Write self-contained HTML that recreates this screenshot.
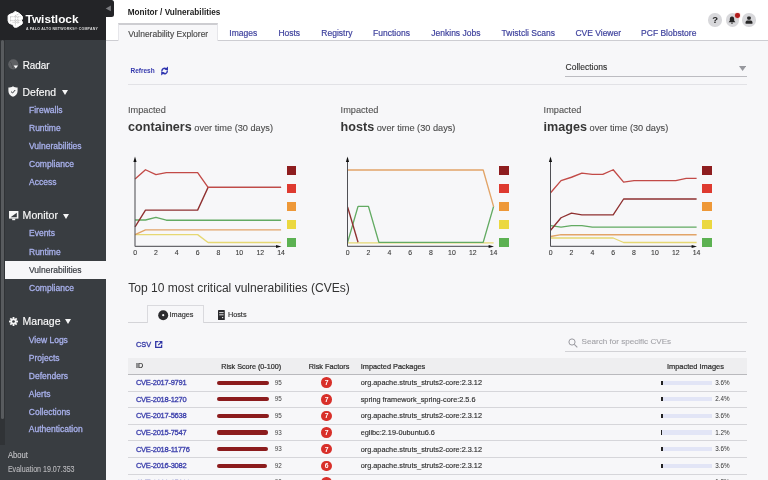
<!DOCTYPE html>
<html><head><meta charset="utf-8"><style>
html,body{margin:0;padding:0;}
body{width:768px;height:480px;overflow:hidden;position:relative;background:#f7f7f9;font-family:"Liberation Sans", sans-serif;}
#root{position:absolute;left:0;top:0;width:768px;height:480px;will-change:transform;}
</style></head><body>
<div id="root"><div style="position:absolute;left:106px;top:0px;width:662px;height:40px;background:#ffffff;"></div><div style="position:absolute;left:106px;top:39.8px;width:662px;height:1.3px;background:#cdcdd2;"></div><div style="position:absolute;left:127.8px;top:9.16px;font-size:8.2px;line-height:8.2px;color:#222;font-weight:700;white-space:nowrap;">Monitor / Vulnerabilities</div><div style="position:absolute;left:118.2px;top:23.1px;width:99.8px;height:18px;background:#f7f7f9;border-top:2px solid #cdcdd1;border-left:1px solid #e6e6ea;border-right:1px solid #e6e6ea;box-sizing:border-box;"></div><div style="position:absolute;left:128.2px;top:29.60px;font-size:8.5px;line-height:8.5px;color:#4a4a4a;font-weight:400;white-space:nowrap;-webkit-text-stroke:0.15px #4a4a4a;">Vulnerability Explorer</div><div style="position:absolute;left:229.3px;top:29.00px;font-size:8.5px;line-height:8.5px;color:#3c3f9c;font-weight:400;white-space:nowrap;-webkit-text-stroke:0.18px #3c3f9c;">Images</div><div style="position:absolute;left:278.4px;top:29.00px;font-size:8.5px;line-height:8.5px;color:#3c3f9c;font-weight:400;white-space:nowrap;-webkit-text-stroke:0.18px #3c3f9c;">Hosts</div><div style="position:absolute;left:321.3px;top:29.00px;font-size:8.5px;line-height:8.5px;color:#3c3f9c;font-weight:400;white-space:nowrap;-webkit-text-stroke:0.18px #3c3f9c;">Registry</div><div style="position:absolute;left:373.1px;top:29.00px;font-size:8.5px;line-height:8.5px;color:#3c3f9c;font-weight:400;white-space:nowrap;-webkit-text-stroke:0.18px #3c3f9c;">Functions</div><div style="position:absolute;left:431.3px;top:29.00px;font-size:8.5px;line-height:8.5px;color:#3c3f9c;font-weight:400;white-space:nowrap;-webkit-text-stroke:0.18px #3c3f9c;">Jenkins Jobs</div><div style="position:absolute;left:501.6px;top:29.00px;font-size:8.5px;line-height:8.5px;color:#3c3f9c;font-weight:400;white-space:nowrap;-webkit-text-stroke:0.18px #3c3f9c;">Twistcli Scans</div><div style="position:absolute;left:575.4px;top:29.00px;font-size:8.5px;line-height:8.5px;color:#3c3f9c;font-weight:400;white-space:nowrap;-webkit-text-stroke:0.18px #3c3f9c;">CVE Viewer</div><div style="position:absolute;left:641.1px;top:29.00px;font-size:8.5px;line-height:8.5px;color:#3c3f9c;font-weight:400;white-space:nowrap;-webkit-text-stroke:0.18px #3c3f9c;">PCF Blobstore</div><div style="position:absolute;left:708.4px;top:13.3px;width:13.4px;height:13.4px;background:#d8d8db;border-radius:50%;"></div><div style="position:absolute;left:725.5999999999999px;top:13.3px;width:13.4px;height:13.4px;background:#d8d8db;border-radius:50%;"></div><div style="position:absolute;left:742.4px;top:13.3px;width:13.4px;height:13.4px;background:#d8d8db;border-radius:50%;"></div><div style="position:absolute;left:712.3px;top:15.36px;font-size:9.5px;line-height:9.5px;color:#222;font-weight:700;white-space:nowrap;">?</div><svg style="position:absolute;left:728.2px;top:16.2px" width="8" height="8" viewBox="0 0 8 8"><path d="M4 0.4 C2.4 0.4 1.8 1.8 1.8 3.2 L1.8 4.8 L0.6 6.3 L7.4 6.3 L6.2 4.8 L6.2 3.2 C6.2 1.8 5.6 0.4 4 0.4Z M3.1 6.8 L4.9 6.8 C4.9 7.5 4.5 7.8 4 7.8 C3.5 7.8 3.1 7.5 3.1 6.8Z" fill="#262626"/></svg><div style="position:absolute;left:735.2px;top:12.8px;width:4.9px;height:4.9px;background:#b01c1c;border-radius:50%;box-shadow:0 0 1.2px #e0403a;"></div><svg style="position:absolute;left:745.4px;top:16.3px" width="8" height="8" viewBox="0 0 8 8"><rect x="2.2" y="0.4" width="3.6" height="3.4" rx="1.2" fill="#262626"/><path d="M0.6 7.8 L0.6 6.2 C0.6 5 1.6 4.4 2.6 4.4 L5.4 4.4 C6.4 4.4 7.4 5 7.4 6.2 L7.4 7.8Z" fill="#262626"/></svg><div style="position:absolute;left:0px;top:0px;width:106.1px;height:480px;background:#393d41;"></div><div style="position:absolute;left:0px;top:0px;width:106.1px;height:40px;background:#232427;"></div><div style="position:absolute;left:105px;top:0px;width:8.8px;height:17.1px;background:#232427;border-radius:0 2.5px 2.5px 0;"></div><svg style="position:absolute;left:105px;top:5px" width="7" height="8" viewBox="0 0 7 8"><path d="M5.9 0.5 L5.9 6.3 L0.7 3.4Z" fill="#7a7b7f"/></svg><div style="position:absolute;left:0px;top:40px;width:4.6px;height:404.5px;background:#303336;"></div><div style="position:absolute;left:0.9px;top:40.2px;width:3.2px;height:378.4px;background:#585b5e;border-radius:1.6px;"></div><svg style="position:absolute;left:0px;top:0px" width="30" height="32" viewBox="0 0 30 32"><path d="M13 13.2 L15.2 11.4 L19.6 13.5 L22.4 16.4 L22.4 19.3 L21.2 20 L22.4 22.1 L22.1 24 L16.9 27.2 L14.3 27.2 L12.7 24.6 L9.2 23.3 L8.1 20.8 L8.1 15.6 L9.9 14.3Z" fill="#fff" stroke="#fff" stroke-width="1" stroke-linejoin="round"/><path d="M10.5 16.6 L10.5 21.5 M15.4 15.5 L15.4 25.5 M17.8 17 L17.8 23.5 M10.5 16.7 L20.5 16.7 M10.5 20.4 L20.5 20.4 M12.5 22.3 L20 22.3 M15.4 15.5 L19.5 13.8" fill="none" stroke="#9c9c9c" stroke-width="0.55" stroke-dasharray="1.2 0.6"/></svg><div style="position:absolute;left:25.6px;top:14.31px;font-size:11.8px;line-height:11.8px;color:#fff;font-weight:700;white-space:nowrap;">Twistlock</div><div style="position:absolute;left:26.2px;top:27.4px;font-size:7px;line-height:7px;font-weight:700;color:#ddd;white-space:nowrap;letter-spacing:0.45px;transform:scale(0.5);transform-origin:0 0;">A PALO ALTO NETWORKS® COMPANY</div><svg style="position:absolute;left:8px;top:59px" width="11" height="11" viewBox="0 0 11 11"><circle cx="5.3" cy="5.3" r="5.1" fill="#5f6164"/><path d="M2 3 Q4 4 3.5 6 Q5 7 4.5 9" fill="none" stroke="#4c4e51" stroke-width="0.9"/><path d="M5.6 6.4 L10 6.4 L7.8 9.6Z" fill="#fff"/></svg><div style="position:absolute;left:22.7px;top:61.02px;font-size:9.9px;line-height:9.9px;color:#fafafa;font-weight:400;white-space:nowrap;-webkit-text-stroke:0.15px #fafafa;transform:scaleY(1.1);transform-origin:0 8.38035px;">Radar</div><svg style="position:absolute;left:8.3px;top:86px" width="10" height="11" viewBox="0 0 10 11"><path d="M5 0.3 C6.5 1.3 8 1.6 9.6 1.6 L9.6 5 C9.6 8 7.5 9.8 5 10.8 C2.5 9.8 0.4 8 0.4 5 L0.4 1.6 C2 1.6 3.5 1.3 5 0.3Z" fill="#f6f6f6"/><path d="M3 5.6 L4.6 7 L7.2 4" fill="none" stroke="#393d41" stroke-width="1"/></svg><div style="position:absolute;left:22.6px;top:87.50px;font-size:10.4px;line-height:10.4px;color:#fafafa;font-weight:400;white-space:nowrap;-webkit-text-stroke:0.15px #fafafa;transform:scaleY(1.1);transform-origin:0 8.803600000000001px;">Defend</div><svg style="position:absolute;left:61.5px;top:90.39999999999999px" width="6" height="5" viewBox="0 0 6 5"><path d="M0 0 L6 0 L3 5Z" fill="#f6f6f6"/></svg><div style="position:absolute;left:29.0px;top:105.80px;font-size:8.5px;line-height:8.5px;color:#a9b1ec;font-weight:400;white-space:nowrap;-webkit-text-stroke:0.3px #a7afea;">Firewalls</div><div style="position:absolute;left:29.0px;top:123.92px;font-size:8.5px;line-height:8.5px;color:#a9b1ec;font-weight:400;white-space:nowrap;-webkit-text-stroke:0.3px #a7afea;">Runtime</div><div style="position:absolute;left:29.0px;top:142.04px;font-size:8.5px;line-height:8.5px;color:#a9b1ec;font-weight:400;white-space:nowrap;-webkit-text-stroke:0.3px #a7afea;">Vulnerabilities</div><div style="position:absolute;left:29.0px;top:160.16px;font-size:8.5px;line-height:8.5px;color:#a9b1ec;font-weight:400;white-space:nowrap;-webkit-text-stroke:0.3px #a7afea;">Compliance</div><div style="position:absolute;left:29.0px;top:178.28px;font-size:8.5px;line-height:8.5px;color:#a9b1ec;font-weight:400;white-space:nowrap;-webkit-text-stroke:0.3px #a7afea;">Access</div><svg style="position:absolute;left:9px;top:211px" width="10" height="10" viewBox="0 0 10 10"><rect x="0" y="0" width="9.4" height="7.6" fill="#f6f6f6"/><path d="M1.6 6.2 L7.8 1.8 L7.8 6.2Z" fill="#393d41"/><rect x="3.2" y="7.6" width="3" height="1.6" fill="#f6f6f6"/></svg><div style="position:absolute;left:22.6px;top:210.43px;font-size:10.6px;line-height:10.6px;color:#fafafa;font-weight:400;white-space:nowrap;-webkit-text-stroke:0.15px #fafafa;transform:scaleY(1.1);transform-origin:0 8.9729px;">Monitor</div><svg style="position:absolute;left:63.3px;top:213.5px" width="6" height="5" viewBox="0 0 6 5"><path d="M0 0 L6 0 L3 5Z" fill="#f6f6f6"/></svg><div style="position:absolute;left:5px;top:261px;width:101.5px;height:18px;background:#f7f7f9;"></div><div style="position:absolute;left:29.0px;top:229.40px;font-size:8.5px;line-height:8.5px;color:#a9b1ec;font-weight:400;white-space:nowrap;-webkit-text-stroke:0.3px #a7afea;">Events</div><div style="position:absolute;left:29.0px;top:247.50px;font-size:8.5px;line-height:8.5px;color:#a9b1ec;font-weight:400;white-space:nowrap;-webkit-text-stroke:0.3px #a7afea;">Runtime</div><div style="position:absolute;left:29.0px;top:265.60px;font-size:8.5px;line-height:8.5px;color:#3a3e44;font-weight:400;white-space:nowrap;-webkit-text-stroke:0.2px #3a3e44;">Vulnerabilities</div><div style="position:absolute;left:29.0px;top:283.70px;font-size:8.5px;line-height:8.5px;color:#a9b1ec;font-weight:400;white-space:nowrap;-webkit-text-stroke:0.3px #a7afea;">Compliance</div><svg style="position:absolute;left:8.6px;top:317px" width="9" height="9" viewBox="0 0 10 10"><g fill="#f6f6f6"><circle cx="5" cy="5" r="3.4"/><rect x="4" y="0" width="2" height="10"/><rect x="0" y="4" width="10" height="2"/><rect x="4" y="0" width="2" height="10" transform="rotate(45 5 5)"/><rect x="4" y="0" width="2" height="10" transform="rotate(-45 5 5)"/></g><circle cx="5" cy="5" r="1.5" fill="#393d41"/></svg><div style="position:absolute;left:22.6px;top:315.81px;font-size:10.5px;line-height:10.5px;color:#fafafa;font-weight:400;white-space:nowrap;-webkit-text-stroke:0.15px #fafafa;transform:scaleY(1.1);transform-origin:0 8.888250000000001px;">Manage</div><svg style="position:absolute;left:65.3px;top:318.8px" width="6" height="5" viewBox="0 0 6 5"><path d="M0 0 L6 0 L3 5Z" fill="#f6f6f6"/></svg><div style="position:absolute;left:28.8px;top:335.80px;font-size:8.5px;line-height:8.5px;color:#a9b1ec;font-weight:400;white-space:nowrap;-webkit-text-stroke:0.3px #a7afea;">View Logs</div><div style="position:absolute;left:28.8px;top:353.73px;font-size:8.5px;line-height:8.5px;color:#a9b1ec;font-weight:400;white-space:nowrap;-webkit-text-stroke:0.3px #a7afea;">Projects</div><div style="position:absolute;left:28.8px;top:371.66px;font-size:8.5px;line-height:8.5px;color:#a9b1ec;font-weight:400;white-space:nowrap;-webkit-text-stroke:0.3px #a7afea;">Defenders</div><div style="position:absolute;left:28.8px;top:389.59px;font-size:8.5px;line-height:8.5px;color:#a9b1ec;font-weight:400;white-space:nowrap;-webkit-text-stroke:0.3px #a7afea;">Alerts</div><div style="position:absolute;left:28.8px;top:407.52px;font-size:8.5px;line-height:8.5px;color:#a9b1ec;font-weight:400;white-space:nowrap;-webkit-text-stroke:0.3px #a7afea;">Collections</div><div style="position:absolute;left:28.8px;top:425.45px;font-size:8.5px;line-height:8.5px;color:#a9b1ec;font-weight:400;white-space:nowrap;-webkit-text-stroke:0.3px #a7afea;">Authentication</div><div style="position:absolute;left:7.9px;top:451.77px;font-size:7.6px;line-height:7.6px;color:#c4c4c7;font-weight:400;white-space:nowrap;-webkit-text-stroke:0.1px #c4c4c7;transform:scaleY(1.1);transform-origin:0 6.4px;">About</div><div style="position:absolute;left:7.9px;top:466.79px;font-size:7.1px;line-height:7.1px;color:#b9b9bc;font-weight:400;white-space:nowrap;-webkit-text-stroke:0.1px #b9b9bc;transform:scaleY(1.15);transform-origin:0 6px;">Evaluation 19.07.353</div><div style="position:absolute;left:130.5px;top:67.50px;font-size:6.5px;line-height:6.5px;color:#3539ad;font-weight:700;white-space:nowrap;">Refresh</div><svg style="position:absolute;left:160.5px;top:66px" width="7.2" height="10" viewBox="0 0 7.2 10"><path d="M1 5.4 A2.6 2.6 0 0 1 5.2 2.9" fill="none" stroke="#3036b0" stroke-width="1.4"/><path d="M7 0.4 L7 4.4 L3.4 3.6Z" fill="#3036b0"/><path d="M6.2 4.6 A2.6 2.6 0 0 1 2 7.1" fill="none" stroke="#3036b0" stroke-width="1.4"/><path d="M0.2 9.6 L0.2 5.6 L3.8 6.4Z" fill="#3036b0"/></svg><div style="position:absolute;left:128px;top:83.5px;width:619px;height:1px;background:#e2e2e6;"></div><div style="position:absolute;left:565.6px;top:62.80px;font-size:8.5px;line-height:8.5px;color:#2e2e2e;font-weight:400;white-space:nowrap;-webkit-text-stroke:0.12px #2e2e2e;">Collections</div><div style="position:absolute;left:565px;top:75.9px;width:182px;height:1px;background:#bcbcc1;"></div><svg style="position:absolute;left:738.8px;top:65.6px" width="7.2" height="5" viewBox="0 0 7.2 5"><path d="M0 0 L7.2 0 L3.6 5Z" fill="#97989e"/></svg><div style="position:absolute;left:128.06px;top:105.91px;font-size:9.2px;line-height:9.2px;color:#505050;font-weight:400;white-space:nowrap;-webkit-text-stroke:0.1px #505050;">Impacted</div><div style="position:absolute;left:128.06px;top:120.03px;line-height:12.6px;white-space:nowrap;"><span style="font-size:12.6px;font-weight:700;color:#363636">containers</span><span style="font-size:9.2px;color:#4d4d4d;-webkit-text-stroke:0.12px #4d4d4d"> over time (30 days)</span></div><svg style="position:absolute;left:0px;top:0px" width="768" height="480" viewBox="0 0 768 480"><polyline points="135.06,234.60 145.49,234.60 155.92,234.60 166.35,234.60 176.78,234.60 187.21,234.60 197.64,234.60 208.07,242.50 218.50,242.50 228.93,242.50 239.36,242.50 249.79,242.50 260.22,242.50 270.65,242.50 281.08,242.50" fill="none" stroke="#e6d873" stroke-width="1.35" stroke-linejoin="round"/><polyline points="135.06,234.60 145.49,229.90 155.92,229.90 166.35,229.90 176.78,229.90 187.21,229.90 197.64,229.90 208.07,229.90 218.50,229.90 228.93,229.90 239.36,229.90 249.79,229.90 260.22,229.90 270.65,229.90 281.08,229.90" fill="none" stroke="#e2a468" stroke-width="1.35" stroke-linejoin="round"/><polyline points="135.06,220.00 145.49,220.00 155.92,217.40 166.35,220.20 176.78,220.20 187.21,220.20 197.64,220.20 208.07,220.20 218.50,220.20 228.93,220.20 239.36,220.20 249.79,220.20 260.22,220.20 270.65,220.20 281.08,220.20" fill="none" stroke="#62aa62" stroke-width="1.35" stroke-linejoin="round"/><polyline points="135.06,226.90 145.49,210.10 155.92,210.10 166.35,210.10 176.78,210.10 187.21,210.10 197.64,210.10 208.07,187.40 218.50,187.40 228.93,187.40 239.36,187.40 249.79,187.40 260.22,187.40 270.65,187.40 281.08,187.40" fill="none" stroke="#8f3030" stroke-width="1.35" stroke-linejoin="round"/><polyline points="135.06,179.10 145.49,169.75 155.92,174.60 166.35,172.60 176.78,172.60 187.21,172.60 197.64,172.60 208.07,187.40 218.50,187.40 228.93,187.40 239.36,187.40 249.79,187.40 260.22,187.40 270.65,187.40 281.08,187.40" fill="none" stroke="#c24a47" stroke-width="1.35" stroke-linejoin="round"/><line x1="135.0" y1="161" x2="135.0" y2="246.5" stroke="#505055" stroke-width="1.05"/><line x1="135.0" y1="246.4" x2="277.08" y2="246.4" stroke="#68686d" stroke-width="1.3"/><path d="M133.4 162 L135.0 156.4 L136.6 162Z" fill="#111"/><path d="M276.08 244.9 L281.47999999999996 246.5 L276.08 248.1Z" fill="#111"/></svg><div style="position:absolute;left:125.06px;top:249.76px;width:20px;text-align:center;font-size:6.9px;line-height:6.9px;color:#3a3a3a;-webkit-text-stroke:0.1px #3a3a3a">0</div><div style="position:absolute;left:145.92px;top:249.76px;width:20px;text-align:center;font-size:6.9px;line-height:6.9px;color:#3a3a3a;-webkit-text-stroke:0.1px #3a3a3a">2</div><div style="position:absolute;left:166.78px;top:249.76px;width:20px;text-align:center;font-size:6.9px;line-height:6.9px;color:#3a3a3a;-webkit-text-stroke:0.1px #3a3a3a">4</div><div style="position:absolute;left:187.64px;top:249.76px;width:20px;text-align:center;font-size:6.9px;line-height:6.9px;color:#3a3a3a;-webkit-text-stroke:0.1px #3a3a3a">6</div><div style="position:absolute;left:208.50px;top:249.76px;width:20px;text-align:center;font-size:6.9px;line-height:6.9px;color:#3a3a3a;-webkit-text-stroke:0.1px #3a3a3a">8</div><div style="position:absolute;left:229.36px;top:249.76px;width:20px;text-align:center;font-size:6.9px;line-height:6.9px;color:#3a3a3a;-webkit-text-stroke:0.1px #3a3a3a">10</div><div style="position:absolute;left:250.22px;top:249.76px;width:20px;text-align:center;font-size:6.9px;line-height:6.9px;color:#3a3a3a;-webkit-text-stroke:0.1px #3a3a3a">12</div><div style="position:absolute;left:271.08px;top:249.76px;width:20px;text-align:center;font-size:6.9px;line-height:6.9px;color:#3a3a3a;-webkit-text-stroke:0.1px #3a3a3a">14</div><div style="position:absolute;left:286.76px;top:165.9px;width:9.3px;height:9.5px;background:#8e1d1f;"></div><div style="position:absolute;left:286.76px;top:183.8px;width:9.3px;height:9.5px;background:#de3a30;"></div><div style="position:absolute;left:286.76px;top:201.7px;width:9.3px;height:9.5px;background:#ee9838;"></div><div style="position:absolute;left:286.76px;top:219.6px;width:9.3px;height:9.5px;background:#ebd840;"></div><div style="position:absolute;left:286.76px;top:237.5px;width:9.3px;height:9.5px;background:#5cb152;"></div><div style="position:absolute;left:340.6px;top:105.91px;font-size:9.2px;line-height:9.2px;color:#505050;font-weight:400;white-space:nowrap;-webkit-text-stroke:0.1px #505050;">Impacted</div><div style="position:absolute;left:340.6px;top:120.03px;line-height:12.6px;white-space:nowrap;"><span style="font-size:12.6px;font-weight:700;color:#363636">hosts</span><span style="font-size:9.2px;color:#4d4d4d;-webkit-text-stroke:0.12px #4d4d4d"> over time (30 days)</span></div><svg style="position:absolute;left:0px;top:0px" width="768" height="480" viewBox="0 0 768 480"><polyline points="347.60,242.80 358.03,242.80 368.46,242.80 378.89,242.80 389.32,242.80 399.75,242.80 410.18,242.80 420.61,242.80 431.04,242.80 441.47,242.80 451.90,242.80 462.33,242.80 472.76,242.80 483.19,242.80 493.62,242.80" fill="none" stroke="#e6d873" stroke-width="1.35" stroke-linejoin="round"/><polyline points="347.60,242.40 358.03,206.40 368.46,206.40 378.89,242.40 389.32,242.40 399.75,242.40 410.18,242.40 420.61,242.40 431.04,242.40 441.47,242.40 451.90,242.40 462.33,242.40 472.76,242.40 483.19,242.40 493.62,206.40" fill="none" stroke="#62aa62" stroke-width="1.35" stroke-linejoin="round"/><polyline points="347.60,207.00 358.03,242.20" fill="none" stroke="#8f3030" stroke-width="1.35" stroke-linejoin="round"/><polyline points="347.60,170.00 358.03,170.00 368.46,170.00 378.89,170.00 389.32,170.00 399.75,170.00 410.18,170.00 420.61,170.00 431.04,170.00 441.47,170.00 451.90,170.00 462.33,170.00 472.76,170.00 483.19,170.00 493.62,206.60" fill="none" stroke="#e2a468" stroke-width="1.35" stroke-linejoin="round"/><line x1="347.5" y1="161" x2="347.5" y2="246.5" stroke="#505055" stroke-width="1.05"/><line x1="347.5" y1="246.4" x2="489.62" y2="246.4" stroke="#68686d" stroke-width="1.3"/><path d="M345.9 162 L347.5 156.4 L349.1 162Z" fill="#111"/><path d="M488.62 244.9 L494.02 246.5 L488.62 248.1Z" fill="#111"/></svg><div style="position:absolute;left:337.60px;top:249.76px;width:20px;text-align:center;font-size:6.9px;line-height:6.9px;color:#3a3a3a;-webkit-text-stroke:0.1px #3a3a3a">0</div><div style="position:absolute;left:358.46px;top:249.76px;width:20px;text-align:center;font-size:6.9px;line-height:6.9px;color:#3a3a3a;-webkit-text-stroke:0.1px #3a3a3a">2</div><div style="position:absolute;left:379.32px;top:249.76px;width:20px;text-align:center;font-size:6.9px;line-height:6.9px;color:#3a3a3a;-webkit-text-stroke:0.1px #3a3a3a">4</div><div style="position:absolute;left:400.18px;top:249.76px;width:20px;text-align:center;font-size:6.9px;line-height:6.9px;color:#3a3a3a;-webkit-text-stroke:0.1px #3a3a3a">6</div><div style="position:absolute;left:421.04px;top:249.76px;width:20px;text-align:center;font-size:6.9px;line-height:6.9px;color:#3a3a3a;-webkit-text-stroke:0.1px #3a3a3a">8</div><div style="position:absolute;left:441.90px;top:249.76px;width:20px;text-align:center;font-size:6.9px;line-height:6.9px;color:#3a3a3a;-webkit-text-stroke:0.1px #3a3a3a">10</div><div style="position:absolute;left:462.76px;top:249.76px;width:20px;text-align:center;font-size:6.9px;line-height:6.9px;color:#3a3a3a;-webkit-text-stroke:0.1px #3a3a3a">12</div><div style="position:absolute;left:483.62px;top:249.76px;width:20px;text-align:center;font-size:6.9px;line-height:6.9px;color:#3a3a3a;-webkit-text-stroke:0.1px #3a3a3a">14</div><div style="position:absolute;left:499.3px;top:165.9px;width:9.3px;height:9.5px;background:#8e1d1f;"></div><div style="position:absolute;left:499.3px;top:183.8px;width:9.3px;height:9.5px;background:#de3a30;"></div><div style="position:absolute;left:499.3px;top:201.7px;width:9.3px;height:9.5px;background:#ee9838;"></div><div style="position:absolute;left:499.3px;top:219.6px;width:9.3px;height:9.5px;background:#ebd840;"></div><div style="position:absolute;left:499.3px;top:237.5px;width:9.3px;height:9.5px;background:#5cb152;"></div><div style="position:absolute;left:543.6px;top:105.91px;font-size:9.2px;line-height:9.2px;color:#505050;font-weight:400;white-space:nowrap;-webkit-text-stroke:0.1px #505050;">Impacted</div><div style="position:absolute;left:543.6px;top:120.03px;line-height:12.6px;white-space:nowrap;"><span style="font-size:12.6px;font-weight:700;color:#363636">images</span><span style="font-size:9.2px;color:#4d4d4d;-webkit-text-stroke:0.12px #4d4d4d"> over time (30 days)</span></div><svg style="position:absolute;left:0px;top:0px" width="768" height="480" viewBox="0 0 768 480"><polyline points="550.60,238.00 561.03,238.00 571.46,238.00 581.89,238.00 592.32,238.00 602.75,238.00 613.18,238.00 623.61,242.50 634.04,242.50 644.47,242.50 654.90,242.50 665.33,242.50 675.76,242.50 686.19,242.50 696.62,242.50" fill="none" stroke="#e6d873" stroke-width="1.35" stroke-linejoin="round"/><polyline points="550.60,236.50 561.03,234.70 571.46,234.70 581.89,234.70 592.32,234.70 602.75,234.70 613.18,234.70 623.61,234.70 634.04,234.70 644.47,234.70 654.90,234.70 665.33,234.70 675.76,234.70 686.19,234.70 696.62,234.70" fill="none" stroke="#e2a468" stroke-width="1.35" stroke-linejoin="round"/><polyline points="550.60,225.60 561.03,227.10 571.46,225.60 581.89,225.60 592.32,227.10 602.75,227.10 613.18,227.10 623.61,227.10 634.04,227.10 644.47,227.10 654.90,227.10 665.33,227.10 675.76,227.10 686.19,227.10 696.62,227.10" fill="none" stroke="#62aa62" stroke-width="1.35" stroke-linejoin="round"/><polyline points="550.60,230.30 561.03,217.75 571.46,213.10 581.89,214.90 592.32,214.90 602.75,214.90 613.18,214.90 623.61,199.00 634.04,199.00 644.47,199.00 654.90,199.00 665.33,199.00 675.76,199.00 686.19,199.00 696.62,199.00" fill="none" stroke="#8f3030" stroke-width="1.35" stroke-linejoin="round"/><polyline points="550.60,192.80 561.03,180.60 571.46,177.25 581.89,173.10 592.32,174.40 602.75,174.40 613.18,169.75 623.61,182.10 634.04,180.60 644.47,180.60 654.90,180.60 665.33,180.60 675.76,180.60 686.19,178.40 696.62,178.40" fill="none" stroke="#c24a47" stroke-width="1.35" stroke-linejoin="round"/><line x1="550.5" y1="161" x2="550.5" y2="246.5" stroke="#505055" stroke-width="1.05"/><line x1="550.5" y1="246.4" x2="692.62" y2="246.4" stroke="#68686d" stroke-width="1.3"/><path d="M548.9 162 L550.5 156.4 L552.1 162Z" fill="#111"/><path d="M691.62 244.9 L697.02 246.5 L691.62 248.1Z" fill="#111"/></svg><div style="position:absolute;left:540.60px;top:249.76px;width:20px;text-align:center;font-size:6.9px;line-height:6.9px;color:#3a3a3a;-webkit-text-stroke:0.1px #3a3a3a">0</div><div style="position:absolute;left:561.46px;top:249.76px;width:20px;text-align:center;font-size:6.9px;line-height:6.9px;color:#3a3a3a;-webkit-text-stroke:0.1px #3a3a3a">2</div><div style="position:absolute;left:582.32px;top:249.76px;width:20px;text-align:center;font-size:6.9px;line-height:6.9px;color:#3a3a3a;-webkit-text-stroke:0.1px #3a3a3a">4</div><div style="position:absolute;left:603.18px;top:249.76px;width:20px;text-align:center;font-size:6.9px;line-height:6.9px;color:#3a3a3a;-webkit-text-stroke:0.1px #3a3a3a">6</div><div style="position:absolute;left:624.04px;top:249.76px;width:20px;text-align:center;font-size:6.9px;line-height:6.9px;color:#3a3a3a;-webkit-text-stroke:0.1px #3a3a3a">8</div><div style="position:absolute;left:644.90px;top:249.76px;width:20px;text-align:center;font-size:6.9px;line-height:6.9px;color:#3a3a3a;-webkit-text-stroke:0.1px #3a3a3a">10</div><div style="position:absolute;left:665.76px;top:249.76px;width:20px;text-align:center;font-size:6.9px;line-height:6.9px;color:#3a3a3a;-webkit-text-stroke:0.1px #3a3a3a">12</div><div style="position:absolute;left:686.62px;top:249.76px;width:20px;text-align:center;font-size:6.9px;line-height:6.9px;color:#3a3a3a;-webkit-text-stroke:0.1px #3a3a3a">14</div><div style="position:absolute;left:702.3px;top:165.9px;width:9.3px;height:9.5px;background:#8e1d1f;"></div><div style="position:absolute;left:702.3px;top:183.8px;width:9.3px;height:9.5px;background:#de3a30;"></div><div style="position:absolute;left:702.3px;top:201.7px;width:9.3px;height:9.5px;background:#ee9838;"></div><div style="position:absolute;left:702.3px;top:219.6px;width:9.3px;height:9.5px;background:#ebd840;"></div><div style="position:absolute;left:702.3px;top:237.5px;width:9.3px;height:9.5px;background:#5cb152;"></div><div style="position:absolute;left:128.2px;top:281.70px;font-size:12.05px;line-height:12.05px;color:#333;white-space:nowrap;transform:scaleY(1.1);transform-origin:0 10.20px;">Top 10 most critical vulnerabilities (CVEs)</div><div style="position:absolute;left:128px;top:322px;width:618.5px;height:1px;background:#d4d4d8;"></div><div style="position:absolute;left:147.2px;top:305.3px;width:57px;height:18px;background:#f7f7f9;border:1px solid #dadade;border-bottom:none;box-sizing:border-box;"></div><svg style="position:absolute;left:157.5px;top:309.6px" width="11" height="11" viewBox="0 0 11 11"><circle cx="5.2" cy="5.2" r="5" fill="#2b2b2e"/><circle cx="5.2" cy="5.2" r="1.1" fill="#f7f7f9"/></svg><div style="position:absolute;left:169.6px;top:311.12px;font-size:7.3px;line-height:7.3px;color:#2e2e2e;font-weight:400;white-space:nowrap;-webkit-text-stroke:0.15px #2e2e2e;">Images</div><svg style="position:absolute;left:217.6px;top:310px" width="7" height="10" viewBox="0 0 7 10"><rect x="0" y="0" width="6.8" height="10" rx="0.6" fill="#2b2b2e"/><rect x="1.2" y="2.2" width="4.4" height="0.9" fill="#f7f7f9"/><rect x="1.2" y="4.4" width="4.4" height="0.9" fill="#f7f7f9"/><circle cx="4.6" cy="7.6" r="0.7" fill="#f7f7f9"/></svg><div style="position:absolute;left:227.9px;top:311.12px;font-size:7.3px;line-height:7.3px;color:#2e2e2e;font-weight:400;white-space:nowrap;-webkit-text-stroke:0.15px #2e2e2e;">Hosts</div><div style="position:absolute;left:136px;top:340.98px;font-size:7.35px;line-height:7.35px;color:#3a3ea8;font-weight:400;white-space:nowrap;-webkit-text-stroke:0.35px #3a3ea8;">CSV</div><svg style="position:absolute;left:155.2px;top:340.9px" width="7.4" height="7.2" viewBox="0 0 7.4 7.2"><path d="M3.4 0.7 L0.7 0.7 L0.7 6.5 L6.6 6.5 L6.6 3.8" fill="none" stroke="#3036a6" stroke-width="1.3"/><path d="M3.8 0 L7.4 0 L7.4 3.6Z" fill="#3036a6"/><path d="M6.8 0.6 L3.2 4.2" stroke="#3036a6" stroke-width="1.2"/></svg><svg style="position:absolute;left:568px;top:337.5px" width="10" height="10" viewBox="0 0 10 10"><circle cx="4" cy="4" r="3.1" fill="none" stroke="#9a9aa0" stroke-width="1"/><path d="M6.3 6.3 L9.3 9.3" stroke="#9a9aa0" stroke-width="1.1"/></svg><div style="position:absolute;left:581.6px;top:338.14px;font-size:8.1px;line-height:8.1px;color:#a2a2a7;font-weight:400;white-space:nowrap;-webkit-text-stroke:0.1px #a2a2a7;">Search for specific CVEs</div><div style="position:absolute;left:565.4px;top:351px;width:181px;height:1px;background:#d2d2d6;"></div><div style="position:absolute;left:128px;top:358.0px;width:618.5px;height:16.2px;background:#eeeef0;"></div><div style="position:absolute;left:128px;top:373.9px;width:618.5px;height:1px;background:#b9b9bd;"></div><div style="position:absolute;left:136px;top:363.09px;font-size:7.1px;line-height:7.1px;color:#2a2a2a;font-weight:400;white-space:nowrap;-webkit-text-stroke:0.2px #2a2a2a;">ID</div><div style="position:absolute;left:221.2px;top:363.01px;font-size:7.2px;line-height:7.2px;color:#2a2a2a;font-weight:400;white-space:nowrap;-webkit-text-stroke:0.2px #2a2a2a;">Risk Score (0-100)</div><div style="position:absolute;left:308.8px;top:362.92px;font-size:7.3px;line-height:7.3px;color:#2a2a2a;font-weight:400;white-space:nowrap;-webkit-text-stroke:0.2px #2a2a2a;">Risk Factors</div><div style="position:absolute;left:360.8px;top:362.88px;font-size:7.35px;line-height:7.35px;color:#2a2a2a;font-weight:400;white-space:nowrap;-webkit-text-stroke:0.2px #2a2a2a;">Impacted Packages</div><div style="position:absolute;left:666.9px;top:362.79px;font-size:7.45px;line-height:7.45px;color:#2a2a2a;font-weight:400;white-space:nowrap;-webkit-text-stroke:0.2px #2a2a2a;">Impacted Images</div><div style="position:absolute;left:135.9px;top:379.25px;font-size:7.5px;line-height:7.5px;color:#3a3eab;font-weight:400;white-space:nowrap;letter-spacing:-0.26px;-webkit-text-stroke:0.3px #3a3eab;">CVE-2017-9791</div><div style="position:absolute;left:216.9px;top:380.59999999999997px;width:52.06px;height:4.2px;background:#8c1c1d;border-radius:2.1px;"></div><div style="position:absolute;left:274.8px;top:379.77px;font-size:6.3px;line-height:6.3px;color:#444;font-weight:400;white-space:nowrap;">95</div><div style="position:absolute;left:321.4px;top:377.45px;width:10.5px;height:10.5px;background:#d8302a;border-radius:50%;"></div><div style="position:absolute;left:321.4px;top:379.20px;width:10.5px;text-align:center;font-size:6.8px;line-height:7px;color:#fff;font-weight:700">7</div><div style="position:absolute;left:360.7px;top:379.12px;font-size:7.3px;line-height:7.3px;color:#2e2e2e;font-weight:400;white-space:nowrap;-webkit-text-stroke:0.15px #2e2e2e;">org.apache.struts_struts2-core:2.3.12</div><div style="position:absolute;left:661.2px;top:380.59999999999997px;width:50.7px;height:4.2px;background:#e2e5f6;"></div><div style="position:absolute;left:661.2px;top:380.59999999999997px;width:1.9800000000000002px;height:4.2px;background:#222;"></div><div style="position:absolute;left:715.2px;top:379.67px;font-size:6.3px;line-height:6.3px;color:#333;font-weight:400;white-space:nowrap;">3.6%</div><div style="position:absolute;left:128px;top:390.62px;width:618.5px;height:1px;background:#d6d6da;"></div><div style="position:absolute;left:135.9px;top:395.87px;font-size:7.5px;line-height:7.5px;color:#3a3eab;font-weight:400;white-space:nowrap;letter-spacing:-0.26px;-webkit-text-stroke:0.3px #3a3eab;">CVE-2018-1270</div><div style="position:absolute;left:216.9px;top:397.21999999999997px;width:52.06px;height:4.2px;background:#8c1c1d;border-radius:2.1px;"></div><div style="position:absolute;left:274.8px;top:396.39px;font-size:6.3px;line-height:6.3px;color:#444;font-weight:400;white-space:nowrap;">95</div><div style="position:absolute;left:321.4px;top:394.07px;width:10.5px;height:10.5px;background:#d8302a;border-radius:50%;"></div><div style="position:absolute;left:321.4px;top:395.82px;width:10.5px;text-align:center;font-size:6.8px;line-height:7px;color:#fff;font-weight:700">7</div><div style="position:absolute;left:360.7px;top:395.74px;font-size:7.3px;line-height:7.3px;color:#2e2e2e;font-weight:400;white-space:nowrap;-webkit-text-stroke:0.15px #2e2e2e;">spring framework_spring-core:2.5.6</div><div style="position:absolute;left:661.2px;top:397.21999999999997px;width:50.7px;height:4.2px;background:#e2e5f6;"></div><div style="position:absolute;left:661.2px;top:397.21999999999997px;width:1.32px;height:4.2px;background:#222;"></div><div style="position:absolute;left:715.2px;top:396.29px;font-size:6.3px;line-height:6.3px;color:#333;font-weight:400;white-space:nowrap;">2.4%</div><div style="position:absolute;left:128px;top:407.24px;width:618.5px;height:1px;background:#d6d6da;"></div><div style="position:absolute;left:135.9px;top:412.49px;font-size:7.5px;line-height:7.5px;color:#3a3eab;font-weight:400;white-space:nowrap;letter-spacing:-0.26px;-webkit-text-stroke:0.3px #3a3eab;">CVE-2017-5638</div><div style="position:absolute;left:216.9px;top:413.84px;width:52.06px;height:4.2px;background:#8c1c1d;border-radius:2.1px;"></div><div style="position:absolute;left:274.8px;top:413.01px;font-size:6.3px;line-height:6.3px;color:#444;font-weight:400;white-space:nowrap;">95</div><div style="position:absolute;left:321.4px;top:410.69px;width:10.5px;height:10.5px;background:#d8302a;border-radius:50%;"></div><div style="position:absolute;left:321.4px;top:412.44px;width:10.5px;text-align:center;font-size:6.8px;line-height:7px;color:#fff;font-weight:700">7</div><div style="position:absolute;left:360.7px;top:412.36px;font-size:7.3px;line-height:7.3px;color:#2e2e2e;font-weight:400;white-space:nowrap;-webkit-text-stroke:0.15px #2e2e2e;">org.apache.struts_struts2-core:2.3.12</div><div style="position:absolute;left:661.2px;top:413.84px;width:50.7px;height:4.2px;background:#e2e5f6;"></div><div style="position:absolute;left:661.2px;top:413.84px;width:1.9800000000000002px;height:4.2px;background:#222;"></div><div style="position:absolute;left:715.2px;top:412.91px;font-size:6.3px;line-height:6.3px;color:#333;font-weight:400;white-space:nowrap;">3.6%</div><div style="position:absolute;left:128px;top:423.86px;width:618.5px;height:1px;background:#d6d6da;"></div><div style="position:absolute;left:135.9px;top:429.11px;font-size:7.5px;line-height:7.5px;color:#3a3eab;font-weight:400;white-space:nowrap;letter-spacing:-0.26px;-webkit-text-stroke:0.3px #3a3eab;">CVE-2015-7547</div><div style="position:absolute;left:216.9px;top:430.46px;width:50.964000000000006px;height:4.2px;background:#8c1c1d;border-radius:2.1px;"></div><div style="position:absolute;left:274.8px;top:429.63px;font-size:6.3px;line-height:6.3px;color:#444;font-weight:400;white-space:nowrap;">93</div><div style="position:absolute;left:321.4px;top:427.31px;width:10.5px;height:10.5px;background:#d8302a;border-radius:50%;"></div><div style="position:absolute;left:321.4px;top:429.06px;width:10.5px;text-align:center;font-size:6.8px;line-height:7px;color:#fff;font-weight:700">7</div><div style="position:absolute;left:360.7px;top:428.98px;font-size:7.3px;line-height:7.3px;color:#2e2e2e;font-weight:400;white-space:nowrap;-webkit-text-stroke:0.15px #2e2e2e;">eglibc:2.19-0ubuntu6.6</div><div style="position:absolute;left:661.2px;top:430.46px;width:50.7px;height:4.2px;background:#e2e5f6;"></div><div style="position:absolute;left:661.2px;top:430.46px;width:1px;height:4.2px;background:#222;"></div><div style="position:absolute;left:715.2px;top:429.53px;font-size:6.3px;line-height:6.3px;color:#333;font-weight:400;white-space:nowrap;">1.2%</div><div style="position:absolute;left:128px;top:440.48px;width:618.5px;height:1px;background:#d6d6da;"></div><div style="position:absolute;left:135.9px;top:445.73px;font-size:7.5px;line-height:7.5px;color:#3a3eab;font-weight:400;white-space:nowrap;letter-spacing:-0.26px;-webkit-text-stroke:0.3px #3a3eab;">CVE-2018-11776</div><div style="position:absolute;left:216.9px;top:447.08px;width:50.964000000000006px;height:4.2px;background:#8c1c1d;border-radius:2.1px;"></div><div style="position:absolute;left:274.8px;top:446.25px;font-size:6.3px;line-height:6.3px;color:#444;font-weight:400;white-space:nowrap;">93</div><div style="position:absolute;left:321.4px;top:443.93px;width:10.5px;height:10.5px;background:#d8302a;border-radius:50%;"></div><div style="position:absolute;left:321.4px;top:445.68px;width:10.5px;text-align:center;font-size:6.8px;line-height:7px;color:#fff;font-weight:700">7</div><div style="position:absolute;left:360.7px;top:445.60px;font-size:7.3px;line-height:7.3px;color:#2e2e2e;font-weight:400;white-space:nowrap;-webkit-text-stroke:0.15px #2e2e2e;">org.apache.struts_struts2-core:2.3.12</div><div style="position:absolute;left:661.2px;top:447.08px;width:50.7px;height:4.2px;background:#e2e5f6;"></div><div style="position:absolute;left:661.2px;top:447.08px;width:1.9800000000000002px;height:4.2px;background:#222;"></div><div style="position:absolute;left:715.2px;top:446.15px;font-size:6.3px;line-height:6.3px;color:#333;font-weight:400;white-space:nowrap;">3.6%</div><div style="position:absolute;left:128px;top:457.1px;width:618.5px;height:1px;background:#d6d6da;"></div><div style="position:absolute;left:135.9px;top:462.35px;font-size:7.5px;line-height:7.5px;color:#3a3eab;font-weight:400;white-space:nowrap;letter-spacing:-0.26px;-webkit-text-stroke:0.3px #3a3eab;">CVE-2016-3082</div><div style="position:absolute;left:216.9px;top:463.7px;width:50.416000000000004px;height:4.2px;background:#8c1c1d;border-radius:2.1px;"></div><div style="position:absolute;left:274.8px;top:462.87px;font-size:6.3px;line-height:6.3px;color:#444;font-weight:400;white-space:nowrap;">92</div><div style="position:absolute;left:321.4px;top:460.55px;width:10.5px;height:10.5px;background:#d8302a;border-radius:50%;"></div><div style="position:absolute;left:321.4px;top:462.30px;width:10.5px;text-align:center;font-size:6.8px;line-height:7px;color:#fff;font-weight:700">6</div><div style="position:absolute;left:360.7px;top:462.22px;font-size:7.3px;line-height:7.3px;color:#2e2e2e;font-weight:400;white-space:nowrap;-webkit-text-stroke:0.15px #2e2e2e;">org.apache.struts_struts2-core:2.3.12</div><div style="position:absolute;left:661.2px;top:463.7px;width:50.7px;height:4.2px;background:#e2e5f6;"></div><div style="position:absolute;left:661.2px;top:463.7px;width:1.9800000000000002px;height:4.2px;background:#222;"></div><div style="position:absolute;left:715.2px;top:462.77px;font-size:6.3px;line-height:6.3px;color:#333;font-weight:400;white-space:nowrap;">3.6%</div><div style="position:absolute;left:128px;top:473.72px;width:618.5px;height:1px;background:#d6d6da;"></div><div style="position:absolute;left:135.9px;top:478.97px;font-size:7.5px;line-height:7.5px;color:#3a3eab;font-weight:400;white-space:nowrap;letter-spacing:-0.26px;-webkit-text-stroke:0.3px #3a3eab;">CVE-2019-15133</div><div style="position:absolute;left:216.9px;top:480.32px;width:49.32000000000001px;height:4.2px;background:#8c1c1d;border-radius:2.1px;"></div><div style="position:absolute;left:274.8px;top:479.49px;font-size:6.3px;line-height:6.3px;color:#444;font-weight:400;white-space:nowrap;">90</div><div style="position:absolute;left:321.4px;top:477.17px;width:10.5px;height:10.5px;background:#d8302a;border-radius:50%;"></div><div style="position:absolute;left:321.4px;top:478.92px;width:10.5px;text-align:center;font-size:6.8px;line-height:7px;color:#fff;font-weight:700">6</div><div style="position:absolute;left:360.7px;top:478.84px;font-size:7.3px;line-height:7.3px;color:#2e2e2e;font-weight:400;white-space:nowrap;-webkit-text-stroke:0.15px #2e2e2e;">util-linux_libblkid1:2.31.1-0ubuntu3.3</div><div style="position:absolute;left:661.2px;top:480.32px;width:50.7px;height:4.2px;background:#e2e5f6;"></div><div style="position:absolute;left:661.2px;top:480.32px;width:1px;height:4.2px;background:#222;"></div><div style="position:absolute;left:715.2px;top:479.39px;font-size:6.3px;line-height:6.3px;color:#333;font-weight:400;white-space:nowrap;">1.2%</div><div style="position:absolute;left:128px;top:490.34000000000003px;width:618.5px;height:1px;background:#d6d6da;"></div></div>
</body></html>
